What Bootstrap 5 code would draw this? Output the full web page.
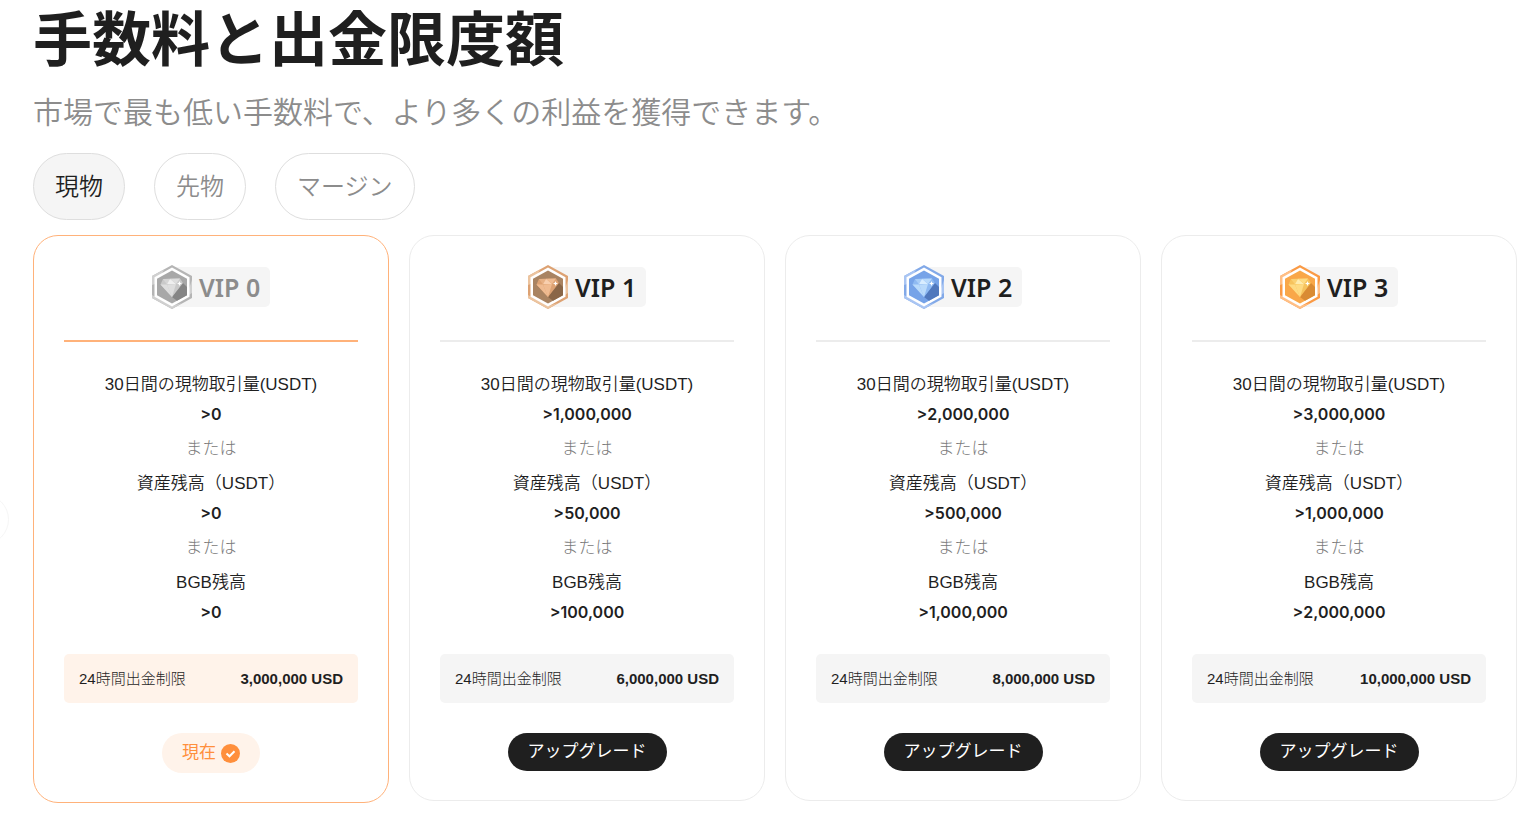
<!DOCTYPE html>
<html lang="ja">
<head>
<meta charset="utf-8">
<meta name="viewport" content="width=device-width, initial-scale=1">
<title>手数料と出金限度額</title>
<link href="https://cdn.jsdelivr.net/npm/bootstrap@5.3.0/dist/css/bootstrap.min.css" rel="stylesheet">
<style>
  body { font-family: "Liberation Sans", "Noto Sans CJK JP", sans-serif; color: #1f1f1f; background: #fff; }
  .fee-page { padding: 7px 19px 12px 33px; }
  .fee-title { font-size: 59px; line-height: 68px; font-weight: 700; margin-bottom: 18px; }
  .fee-lead { font-size: 30px; line-height: 40px; font-weight: 350; color: #8c8c8c; margin-bottom: 20px; }
  .fee-tabs { gap: 29px; margin-bottom: 15px; }
  .fee-tab { border: 1px solid #dedede; border-radius: 34px; background: #fff; color: #8c8c8c; font-size: 24px; font-weight: 350; line-height: 36px; padding: 15px 21px 14px; }
  .fee-tab.active { background: #f5f5f5; color: #1f1f1f; }
  .tiers { display: grid; grid-template-columns: repeat(4, minmax(0, 1fr)); gap: 20px; align-items: start; }
  .tier { border: 1px solid #ececec; border-radius: 25px; padding: 29px 30px; }
  .tier.current { border-color: #ffb27a; }
  .tier-head { padding-bottom: 31px; border-bottom: 2px solid #ececec; }
  .current .tier-head { border-color: #ffb27a; }
  .gem { width: 40px; height: 44px; z-index: 1; }
  .tier-name { font-family: "Noto Sans", sans-serif; font-size: 25px; line-height: 40px; font-weight: 600; background: #f5f5f5; border-radius: 0 5px 5px 0; margin: 0 0 0 -20px; padding: 0 10px 0 27px; width: 98px; white-space: nowrap; }
  .current .tier-name { color: #8c8c8c; }
  .rules { padding-top: 28px; margin-bottom: 28px; font-size: 17px; }
  .rules dt { font-weight: 350; line-height: 30px; }
  .rules dd { font-family: Inter, "Noto Sans CJK JP", sans-serif; font-size: 16px; font-weight: 600; line-height: 28px; margin: 0; }
  .rules .either { font-size: 17px; font-weight: 300; line-height: 41px; color: #7a7a7a; }
  .limit { background: #f5f5f5; border-radius: 5px; font-size: 15px; line-height: 23px; padding: 13px 15px; margin-bottom: 30px; font-weight: 300; }
  .limit strong { font-weight: 700; }
  .current .limit, .state { background: #fff3ea; }
  .state { color: #ff8f3c; font-size: 17px; line-height: 26px; border-radius: 20px; padding: 7px 20px; gap: 5px; }
  .upgrade { background: #1f1f1f; color: #fff; border: 0; border-radius: 19px; font-size: 17px; line-height: 26px; padding: 6px 20px; }
  .slide-prev { left: -42px; top: 494px; width: 51px; height: 51px; border: 1px solid #f6f6f6; background: #fff; }
  .gem-silver { --edge:#b5b5b5; --rim:#d0d0d0; --base:#a8a8a8; --shade:#858585; --mid:#c9c9c9; --lite:#dedede; --pale:#efefef; }
  .gem-bronze { --edge:#dda273; --rim:#ecc49f; --base:#a98361; --shade:#8a6647; --mid:#dda273; --lite:#efbb91; --pale:#f8cfae; }
  .gem-blue { --edge:#82a9e8; --rim:#a9c5f3; --base:#76a3e8; --shade:#5078bd; --mid:#8fbaf2; --lite:#b9dafb; --pale:#d8edff; }
  .gem-gold { --edge:#fa9a45; --rim:#ffbf86; --base:#f9a748; --shade:#d98b34; --mid:#f6c35d; --lite:#fedb82; --pale:#ffecae; }
</style>
</head>
<body>
<svg width="0" height="0" class="position-absolute" aria-hidden="true">
  <defs>
    <symbol id="gem" viewBox="0 0 40 44">
      <path d="M20 0 40 11V33L20 44 0 33V11Z" fill="var(--edge)"/>
      <path d="M0 20V11L12 4.400 6 18ZM40 15V28L34 32ZM0 30 20 41 30 38 20 44 0 33Z" fill="var(--rim)"/>
      <path d="M20 2.500 37.500 12.300V31.700L20 41.500 2.500 31.700V12.300Z" fill="#fff"/>
      <path d="M20 5.500 35 13.800V30.200L20 38.500 5 30.200V13.800Z" fill="var(--base)"/>
      <path d="M30.500 17.500 35 22V30.200L25 35.700 20 32Z" fill="var(--shade)"/>
      <path d="M11 14 28 13.500 31 18 20 32 8.500 19.500Z" fill="var(--mid)"/>
      <path d="M8.500 19.500 15 19.500 20 32Z" fill="var(--lite)"/>
      <path d="M18 13.800 24 19H15Z" fill="var(--pale)"/>
      <path d="M15 19.500 24 19 20 32Z" fill="var(--lite)"/>
      <path d="M18 13.800 28 13.500 24 19Z" fill="var(--lite)"/>
      <path d="M11 14 18 13.800 15 19.500Z" fill="var(--lite)" opacity=".6"/>
      <path d="M27.500 16 28.200 17.800 30 18.500 28.200 19.200 27.500 21 26.800 19.200 25 18.500 26.800 17.800Z" fill="#fff"/>
    </symbol>
  </defs>
</svg>

<main class="fee-page position-relative overflow-hidden">
  <h1 class="fee-title">手数料と出金限度額</h1>
  <p class="fee-lead">市場で最も低い手数料で、より多くの利益を獲得できます。</p>
  <div class="fee-tabs d-flex flex-wrap" role="tablist">
    <button type="button" class="fee-tab active" role="tab" aria-selected="true">現物</button>
    <button type="button" class="fee-tab" role="tab" aria-selected="false">先物</button>
    <button type="button" class="fee-tab" role="tab" aria-selected="false">マージン</button>
  </div>
  <button type="button" class="slide-prev position-absolute rounded-circle" aria-label="前へ"></button>

  <div class="tiers">
    <section class="tier current text-center">
      <div class="tier-head d-flex justify-content-center align-items-center">
        <svg class="gem gem-silver flex-shrink-0" aria-hidden="true"><use href="#gem"/></svg><h2 class="tier-name text-start">VIP 0</h2>
      </div>
      <dl class="rules">
        <dt>30日間の現物取引量(USDT)</dt><dd>&gt;0</dd><dd class="either">または</dd>
        <dt>資産残高（USDT）</dt><dd>&gt;0</dd><dd class="either">または</dd>
        <dt>BGB残高</dt><dd>&gt;0</dd>
      </dl>
      <div class="limit d-flex justify-content-between"><span>24時間出金制限</span><strong>3,000,000 USD</strong></div>
      <div class="d-flex justify-content-center">
        <span class="state d-flex align-items-center">現在
          <svg width="19" height="19" viewBox="0 0 19 19" aria-hidden="true"><circle cx="9.500" cy="9.500" r="9.500" fill="#ff8f3c"/><path d="M5.500 9.500 8.500 12.300 13.500 7.300" fill="none" stroke="#fff" stroke-width="2"/></svg>
        </span>
      </div>
    </section>

    <section class="tier text-center">
      <div class="tier-head d-flex justify-content-center align-items-center">
        <svg class="gem gem-bronze flex-shrink-0" aria-hidden="true"><use href="#gem"/></svg><h2 class="tier-name text-start">VIP 1</h2>
      </div>
      <dl class="rules">
        <dt>30日間の現物取引量(USDT)</dt><dd>&gt;1,000,000</dd><dd class="either">または</dd>
        <dt>資産残高（USDT）</dt><dd>&gt;50,000</dd><dd class="either">または</dd>
        <dt>BGB残高</dt><dd>&gt;100,000</dd>
      </dl>
      <div class="limit d-flex justify-content-between"><span>24時間出金制限</span><strong>6,000,000 USD</strong></div>
      <div class="d-flex justify-content-center"><button type="button" class="upgrade">アップグレード</button></div>
    </section>

    <section class="tier text-center">
      <div class="tier-head d-flex justify-content-center align-items-center">
        <svg class="gem gem-blue flex-shrink-0" aria-hidden="true"><use href="#gem"/></svg><h2 class="tier-name text-start">VIP 2</h2>
      </div>
      <dl class="rules">
        <dt>30日間の現物取引量(USDT)</dt><dd>&gt;2,000,000</dd><dd class="either">または</dd>
        <dt>資産残高（USDT）</dt><dd>&gt;500,000</dd><dd class="either">または</dd>
        <dt>BGB残高</dt><dd>&gt;1,000,000</dd>
      </dl>
      <div class="limit d-flex justify-content-between"><span>24時間出金制限</span><strong>8,000,000 USD</strong></div>
      <div class="d-flex justify-content-center"><button type="button" class="upgrade">アップグレード</button></div>
    </section>

    <section class="tier text-center">
      <div class="tier-head d-flex justify-content-center align-items-center">
        <svg class="gem gem-gold flex-shrink-0" aria-hidden="true"><use href="#gem"/></svg><h2 class="tier-name text-start">VIP 3</h2>
      </div>
      <dl class="rules">
        <dt>30日間の現物取引量(USDT)</dt><dd>&gt;3,000,000</dd><dd class="either">または</dd>
        <dt>資産残高（USDT）</dt><dd>&gt;1,000,000</dd><dd class="either">または</dd>
        <dt>BGB残高</dt><dd>&gt;2,000,000</dd>
      </dl>
      <div class="limit d-flex justify-content-between"><span>24時間出金制限</span><strong>10,000,000 USD</strong></div>
      <div class="d-flex justify-content-center"><button type="button" class="upgrade">アップグレード</button></div>
    </section>
  </div>
</main>
<script src="https://cdn.jsdelivr.net/npm/bootstrap@5.3.0/dist/js/bootstrap.bundle.min.js"></script>
</body>
</html>
